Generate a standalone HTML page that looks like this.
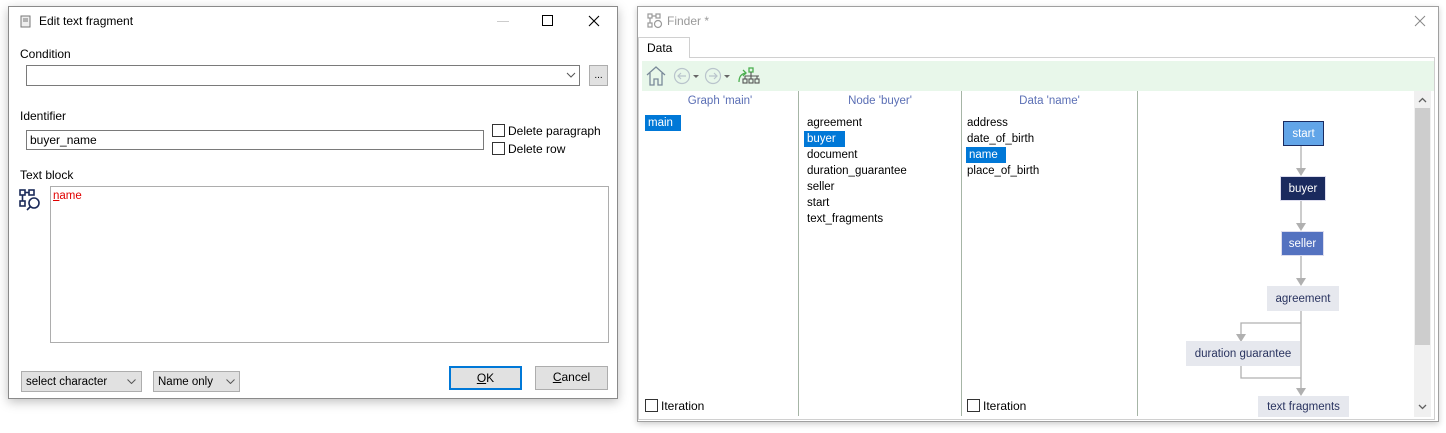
<!DOCTYPE html>
<html><head><style>
*{box-sizing:border-box;margin:0;padding:0}
body{width:1446px;height:433px;background:#fff;position:relative;overflow:hidden;font-family:"Liberation Sans",sans-serif;font-size:12px;color:#000}
.a{position:absolute}
.box{position:absolute;border:1px solid #7a7a7a;background:#fff}
.cb{position:absolute;width:13px;height:13px;border:1px solid #333;background:#fff}
.sel{background:#0078d7;color:#fff}
.it{position:absolute;font-size:11.5px;height:16px;line-height:16px;padding:0 3px}
.hd{position:absolute;color:#5b6fb5;font-size:11.5px;text-align:center}
.node{position:absolute;font-size:11.5px;text-align:center;display:flex;align-items:center;justify-content:center}
.cmb{position:absolute;border:1px solid #adadad;background:#e1e1e1;font-size:11.5px;line-height:20px;padding-left:4px}
.btn{position:absolute;border:1px solid #adadad;background:#e1e1e1;text-align:center;font-size:12px;line-height:21px}
</style></head><body>
<div class="a" style="left:8px;top:6px;width:610px;height:393px;border:1px solid #8a8a8a;box-shadow:0 3px 10px rgba(0,0,0,.25);background:#fff"></div>
<svg class="a" style="left:20px;top:15px" width="12" height="13"><rect x="1" y="1" width="9" height="11" fill="#eee" stroke="#777"/><line x1="3" y1="4" x2="8" y2="4" stroke="#777"/><line x1="3" y1="6" x2="8" y2="6" stroke="#777"/></svg>
<div class="a" style="left:39px;top:14px;font-size:12px">Edit text fragment</div>
<div class="a" style="left:497px;top:21px;width:12px;height:1px;background:#ccc"></div>
<div class="a" style="left:542px;top:15px;width:11px;height:11px;border:1px solid #000"></div>
<svg class="a" style="left:588px;top:15px" width="12" height="12"><path d="M1 1L11 11M11 1L1 11" stroke="#000" stroke-width="1.1"/></svg>
<div class="a" style="left:20px;top:47px">Condition</div>
<div class="box" style="left:26px;top:65px;width:554px;height:21px"></div>
<svg class="a" style="left:566px;top:72px" width="10" height="6"><path d="M1 1L5 5L9 1" stroke="#555" fill="none"/></svg>
<div class="a" style="left:589px;top:65px;width:19px;height:21px;border:1px solid #adadad;background:#e1e1e1;font-size:10px;text-align:center;line-height:19px">...</div>
<div class="a" style="left:20px;top:109px">Identifier</div>
<div class="box" style="left:26px;top:130px;width:458px;height:20px;padding-left:3px;line-height:18px;font-size:12px">buyer_name</div>
<div class="cb" style="left:492px;top:124px"></div><div class="a" style="left:508px;top:124px;font-size:12px">Delete paragraph</div>
<div class="cb" style="left:492px;top:142px"></div><div class="a" style="left:508px;top:142px;font-size:12px">Delete row</div>
<div class="a" style="left:20px;top:168px">Text block</div>
<svg class="a" style="left:19px;top:189px" width="24" height="22"><g stroke="#1c2b5a" stroke-width="1.6" fill="none"><rect x="1" y="1" width="5" height="5"/><rect x="10" y="1" width="5" height="5"/><line x1="6" y1="3.5" x2="10" y2="3.5"/><line x1="3.5" y1="6" x2="3.5" y2="12"/><rect x="1" y="12" width="5" height="5"/><circle cx="15" cy="14" r="5"/><line x1="11.5" y1="17.5" x2="8" y2="21"/></g></svg>
<div class="box" style="left:50px;top:186px;width:559px;height:157px;border-color:#adadad"></div>
<div class="a" style="left:53px;top:190px;color:#e00000;font-size:11.5px"><u>n</u>ame</div>
<div class="cmb" style="left:21px;top:371px;width:121px;height:21px">select character</div>
<svg class="a" style="left:127px;top:379px" width="9" height="5"><path d="M0.5 0.5L4.5 4.5L8.5 0.5" stroke="#555" fill="none"/></svg>
<div class="cmb" style="left:153px;top:371px;width:87px;height:21px">Name only</div>
<svg class="a" style="left:226px;top:379px" width="9" height="5"><path d="M0.5 0.5L4.5 4.5L8.5 0.5" stroke="#555" fill="none"/></svg>
<div class="btn" style="left:449px;top:366px;width:73px;height:24px;border:2px solid #0078d7;line-height:20px"><u>O</u>K</div>
<div class="btn" style="left:535px;top:366px;width:73px;height:24px"><u>C</u>ancel</div>

<div class="a" style="left:637px;top:6px;width:802px;height:416px;border:1px solid #a0a0a0;box-shadow:0 2px 6px rgba(0,0,0,.2);background:#fff"></div>
<svg class="a" style="left:647px;top:13px" width="16" height="16"><g stroke="#999" stroke-width="1.2" fill="none"><rect x="1" y="1" width="4" height="4"/><rect x="9" y="1" width="4" height="4"/><line x1="5" y1="3" x2="9" y2="3"/><line x1="3" y1="5" x2="3" y2="10"/><rect x="1" y="10" width="4" height="4"/><circle cx="11" cy="11" r="3.5"/></g></svg>
<div class="a" style="left:667px;top:14px;color:#999;font-size:12px">Finder *</div>
<svg class="a" style="left:1414px;top:15px" width="12" height="12"><path d="M1 1L11 11M11 1L1 11" stroke="#888" stroke-width="1"/></svg>
<div class="a" style="left:638px;top:57px;width:797px;height:363px;border:1px solid #d0d0d0"></div>
<div class="a" style="left:638px;top:37px;width:52px;height:21px;border:1px solid #d0d0d0;border-bottom:none;background:#fff;padding:3px 0 0 8px;font-size:12px">Data</div>
<div class="a" style="left:642px;top:61px;width:792px;height:30px;background:#e8f7ea"></div>
<svg class="a" style="left:645px;top:64px" width="125" height="24"><g fill="none" stroke="#7a8a99" stroke-width="1.3"><path d="M2 11L11 3L20 11M5 9V21H9V15H13V21H17V9"/></g><g fill="none" stroke="#b9c4cc" stroke-width="1.2"><circle cx="37" cy="12" r="7.5"/><path d="M41 12H33M36 9L33 12L36 15"/><circle cx="68" cy="12" r="7.5"/><path d="M64 12H72M69 9L72 12L69 15"/></g><path d="M48 11H54L51 14Z" fill="#666"/><path d="M79 11H85L82 14Z" fill="#666"/><g fill="none" stroke="#4caf50" stroke-width="1.3"><path d="M94 18Q94 10 101 9M98 6L101 9L98 12"/><rect x="104" y="4" width="4" height="4"/></g><g fill="none" stroke="#555" stroke-width="1.1"><path d="M106 8V12M100 12H114M100 12V15M106 12V15M112 12V15"/><rect x="98" y="15" width="4" height="4"/><rect x="104" y="15" width="4" height="4"/><rect x="110" y="15" width="4" height="4"/></g></svg>
<div class="a" style="left:798px;top:91px;width:1px;height:325px;background:#a6b5a6"></div>
<div class="a" style="left:961px;top:91px;width:1px;height:325px;background:#a6b5a6"></div>
<div class="a" style="left:1137px;top:91px;width:1px;height:325px;background:#a6b5a6"></div>
<div class="hd" style="left:642px;top:95px;width:156px">Graph 'main'</div>
<div class="hd" style="left:799px;top:95px;width:162px">Node 'buyer'</div>
<div class="hd" style="left:962px;top:95px;width:175px">Data 'name'</div>
<div class="it sel" style="left:645px;top:115px;width:36px">main</div>
<div class="it" style="left:804px;top:115px">agreement</div>
<div class="it sel" style="left:804px;top:131px;width:41px">buyer</div>
<div class="it" style="left:804px;top:147px">document</div>
<div class="it" style="left:804px;top:163px">duration_guarantee</div>
<div class="it" style="left:804px;top:179px">seller</div>
<div class="it" style="left:804px;top:195px">start</div>
<div class="it" style="left:804px;top:211px">text_fragments</div>
<div class="it" style="left:964px;top:115px">address</div>
<div class="it" style="left:964px;top:131px">date_of_birth</div>
<div class="it sel" style="left:966px;top:147px;width:40px">name</div>
<div class="it" style="left:964px;top:163px">place_of_birth</div>
<div class="cb" style="left:645px;top:399px"></div><div class="a" style="left:661px;top:399px;font-size:12px">Iteration</div>
<div class="cb" style="left:967px;top:399px"></div><div class="a" style="left:983px;top:399px;font-size:12px">Iteration</div>
<div class="a" style="left:1414px;top:91px;width:17px;height:326px;background:#f0f0f0"></div>
<div class="a" style="left:1415px;top:108px;width:15px;height:237px;background:#cdcdcd"></div>
<svg class="a" style="left:1418px;top:97px" width="9" height="6"><path d="M1 5L4.5 1.5L8 5" stroke="#606060" fill="none" stroke-width="1.3"/></svg>
<svg class="a" style="left:1418px;top:404px" width="9" height="6"><path d="M1 1L4.5 4.5L8 1" stroke="#606060" fill="none" stroke-width="1.3"/></svg>
<svg class="a" style="left:1138px;top:91px" width="276" height="326"><g stroke="#b0b0b0" stroke-width="1.3" fill="none"><path d="M163 55V79M163 110V134M163 165V189M163 220V299M163 232H103V245M103 275V287H163"/></g><g fill="#b0b0b0"><path d="M158 77H168L163 85Z"/><path d="M158 132H168L163 140Z"/><path d="M158 187H168L163 195Z"/><path d="M98 243H108L103 251Z"/><path d="M158 297H168L163 305Z"/></g></svg>
<div class="node" style="left:1283px;top:121px;width:41px;height:25px;background:#62a5e8;border:1px solid #1a2b60;color:#fff">start</div>
<div class="node" style="left:1280px;top:176px;width:46px;height:25px;background:#1a2a5e;border:1px solid #dde;color:#fff">buyer</div>
<div class="node" style="left:1281px;top:231px;width:43px;height:25px;background:#5472c0;border:1px solid #dde;color:#fff">seller</div>
<div class="node" style="left:1267px;top:286px;width:72px;height:25px;background:#e6e8ee;color:#2a3460">agreement</div>
<div class="node" style="left:1186px;top:341px;width:114px;height:25px;background:#e6e8ee;color:#2a3460">duration guarantee</div>
<div class="node" style="left:1258px;top:396px;width:91px;height:21px;background:#e6e8ee;color:#2a3460">text fragments</div>
</body></html>
